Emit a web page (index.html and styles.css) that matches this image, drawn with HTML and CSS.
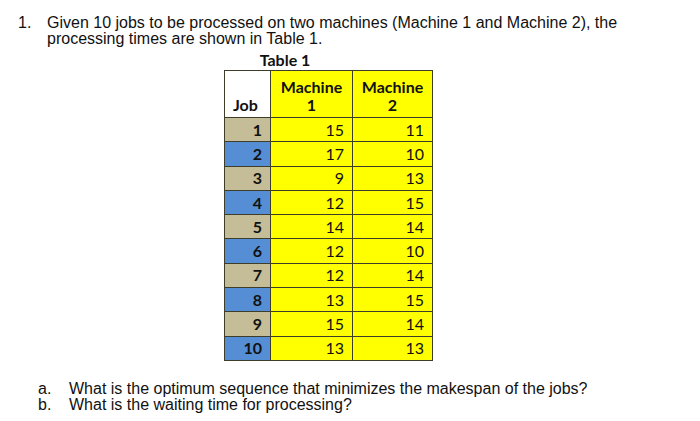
FILE: index.html
```html
<!DOCTYPE html>
<html>
<head>
<meta charset="utf-8">
<link rel="stylesheet" href="styles.css">
</head>
<body>
<div class="page">
  <div class="item">
    <span class="marker">1.</span>
    <div class="text">Given 10 jobs to be processed on two machines (Machine 1 and Machine 2), the<br>processing times are shown in Table 1.</div>
  </div>
  <div class="table-block">
    <div class="caption">Table 1</div>
    <table class="jobs">
      <thead>
        <tr><th class="job-h">Job</th><th class="m">Machine<br>1</th><th class="m">Machine<br>2</th></tr>
      </thead>
      <tbody>
        <tr><td class="job tan">1</td><td>15</td><td>11</td></tr>
        <tr><td class="job blue">2</td><td>17</td><td>10</td></tr>
        <tr><td class="job tan">3</td><td>9</td><td>13</td></tr>
        <tr><td class="job blue">4</td><td>12</td><td>15</td></tr>
        <tr><td class="job tan">5</td><td>14</td><td>14</td></tr>
        <tr><td class="job blue">6</td><td>12</td><td>10</td></tr>
        <tr><td class="job tan">7</td><td>12</td><td>14</td></tr>
        <tr><td class="job blue">8</td><td>13</td><td>15</td></tr>
        <tr><td class="job tan">9</td><td>15</td><td>14</td></tr>
        <tr><td class="job blue">10</td><td>13</td><td>13</td></tr>
      </tbody>
    </table>
  </div>
  <div class="subs">
    <div class="item sub"><span class="marker">a.</span><div class="text">What is the optimum sequence that minimizes the makespan of the jobs?</div></div>
    <div class="item sub"><span class="marker">b.</span><div class="text">What is the waiting time for processing?</div></div>
  </div>
</div>
</body>
</html>
```
FILE: styles.css
```css
html, body {
  margin: 0;
  padding: 0;
  background: #fff;
}
.page {
  width: 700px;
  height: 421px;
  padding-top: 15px;
  box-sizing: border-box;
  font-family: "Liberation Sans", Arial, sans-serif;
  color: #111;
}
.item {
  display: flex;
  font-size: 16px;
  line-height: 16px;
}
.item .marker {
  width: 29px;
  padding-left: 18px;
  flex: none;
}
.table-block {
  display: flex;
  flex-direction: column;
  align-items: flex-start;
  padding-left: 224px;
  margin-top: 3px;
  font-family: Lato, "Open Sans", sans-serif;
}
.caption {
  width: 208px;
  text-align: center;
  font-weight: bold;
  font-size: 16px;
  line-height: 20px;
  margin-left: -43px;
}
.jobs {
  border-collapse: collapse;
  font-size: 16px;
  color: #111;
}
.jobs th, .jobs td {
  border: 1px solid #3d3d2a;
  padding: 0 8px;
  height: 23.3px;
  line-height: 18px;
}
.jobs th {
  font-weight: bold;
  height: 43px;
  background: #ffff00;
  text-align: center;
  vertical-align: bottom;
  padding: 0 0 3px;
}
.jobs th.job-h {
  background: #fff;
  text-align: left;
  width: 37px;
  padding-left: 8px;
}
.jobs th.m:nth-child(2) { width: 81px; }
.jobs th.m:nth-child(3) { width: 79px; }
.jobs td {
  background: #ffff00;
  text-align: right;
}
.jobs td.job {
  font-weight: bold;
}
.jobs td.tan { background: #c4bd97; }
.jobs td.blue { background: #558ed5; }
.subs {
  margin-top: 20px;
}
.item.sub .marker {
  width: 31px;
  padding-left: 38px;
}
```
